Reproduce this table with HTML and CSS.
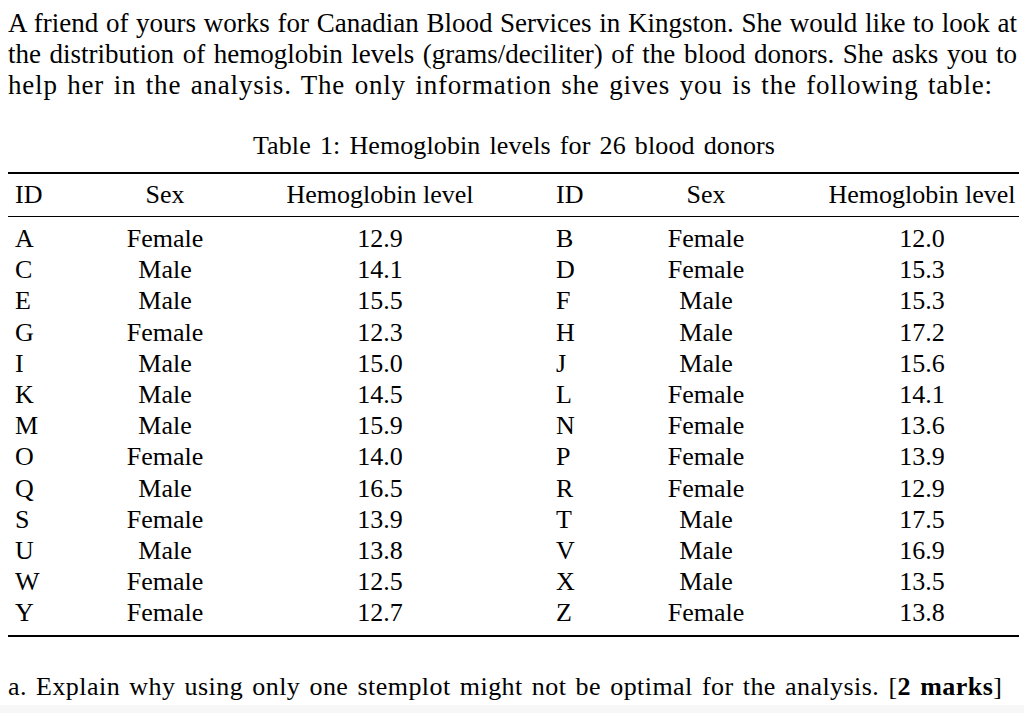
FILE: index.html
```html
<!DOCTYPE html>
<html>
<head>
<meta charset="utf-8">
<link rel="stylesheet" href="styles.css">
</head>
<body>
<div class="page">
  <p class="intro">
    <span class="line just">A friend of yours works for Canadian Blood Services in Kingston. She would like to look at</span>
    <span class="line just">the distribution of hemoglobin levels (grams/deciliter) of the blood donors. She asks you to</span>
    <span class="line last">help her in the analysis. The only information she gives you is the following table:</span>
  </p>
  <div class="caption">Table 1: Hemoglobin levels for 26 blood donors</div>
  <table class="data">
    <colgroup>
      <col class="c1"><col class="c2"><col class="c3"><col class="c4"><col class="c5"><col class="c6">
    </colgroup>
    <thead>
      <tr><th class="l">ID</th><th>Sex</th><th>Hemoglobin level</th><th class="l id2">ID</th><th>Sex</th><th class="hb2">Hemoglobin level</th></tr>
    </thead>
    <tbody>
      <tr><td class="l">A</td><td>Female</td><td>12.9</td><td class="l id2">B</td><td>Female</td><td class="hb2">12.0</td></tr>
      <tr><td class="l">C</td><td>Male</td><td>14.1</td><td class="l id2">D</td><td>Female</td><td class="hb2">15.3</td></tr>
      <tr><td class="l">E</td><td>Male</td><td>15.5</td><td class="l id2">F</td><td>Male</td><td class="hb2">15.3</td></tr>
      <tr><td class="l">G</td><td>Female</td><td>12.3</td><td class="l id2">H</td><td>Male</td><td class="hb2">17.2</td></tr>
      <tr><td class="l">I</td><td>Male</td><td>15.0</td><td class="l id2">J</td><td>Male</td><td class="hb2">15.6</td></tr>
      <tr><td class="l">K</td><td>Male</td><td>14.5</td><td class="l id2">L</td><td>Female</td><td class="hb2">14.1</td></tr>
      <tr><td class="l">M</td><td>Male</td><td>15.9</td><td class="l id2">N</td><td>Female</td><td class="hb2">13.6</td></tr>
      <tr><td class="l">O</td><td>Female</td><td>14.0</td><td class="l id2">P</td><td>Female</td><td class="hb2">13.9</td></tr>
      <tr><td class="l">Q</td><td>Male</td><td>16.5</td><td class="l id2">R</td><td>Female</td><td class="hb2">12.9</td></tr>
      <tr><td class="l">S</td><td>Female</td><td>13.9</td><td class="l id2">T</td><td>Male</td><td class="hb2">17.5</td></tr>
      <tr><td class="l">U</td><td>Male</td><td>13.8</td><td class="l id2">V</td><td>Male</td><td class="hb2">16.9</td></tr>
      <tr><td class="l">W</td><td>Female</td><td>12.5</td><td class="l id2">X</td><td>Male</td><td class="hb2">13.5</td></tr>
      <tr><td class="l">Y</td><td>Female</td><td>12.7</td><td class="l id2">Z</td><td>Female</td><td class="hb2">13.8</td></tr>
    </tbody>
  </table>
  <p class="question">a. Explain why using only one stemplot might not be optimal for the analysis. [<b>2 marks</b>]</p>
</div>
</body>
</html>
```
FILE: styles.css
```css
html {
  background: #f7f7f7;
}
body {
  margin: 0;
  font-family: "Liberation Serif", "Times New Roman", serif;
  font-size: 26px;
  line-height: 31px;
  color: #000;
}
.page {
  background: #fff;
  height: 705px;
  box-sizing: border-box;
  padding: 8px 5px 0 8px;
}
.intro {
  margin: 0 2px 0 0;
  font-size: 27px;
  line-height: 31px;
}
.line {
  display: block;
  text-align: left;
  white-space: nowrap;
}
.line.just {
  text-align: justify;
  text-align-last: justify;
  white-space: normal;
}
.line.last {
  letter-spacing: 0.8px;
  word-spacing: 2px;
}
.caption {
  margin-top: 29px;
  text-align: center;
  padding-left: 1px;
  word-spacing: 2.5px;
  letter-spacing: 0.1px;
}
.data {
  margin-top: 11px;
  width: 1011px;
  table-layout: fixed;
  border-collapse: separate;
  border-spacing: 0;
}
.c1 { width: 92px; }
.c2 { width: 130px; }
.c3 { width: 300px; }
.c4 { width: 110px; }
.c5 { width: 132px; }
.c6 { width: 247px; }
.data th,
.data td {
  font-weight: normal;
  text-align: center;
  padding: 0;
  line-height: 31.2px;
  white-space: nowrap;
}
.data th {
  border-top: 2px solid #000;
  border-bottom: 1px solid #000;
  padding: 5px 0 6px;
  line-height: 31px;
}
.data .l {
  text-align: left;
  padding-left: 7px;
}
.data .id2 {
  padding-left: 26px;
}
.data .hb2 {
  padding-left: 53px;
  padding-right: 0;
}
.data tbody tr:first-child td {
  padding-top: 6px;
}
.data tbody tr:last-child td {
  padding-bottom: 6px;
  border-bottom: 2px solid #000;
}
.question {
  margin: 34px 0 0;
  white-space: nowrap;
  word-spacing: 2.2px;
  letter-spacing: 0.45px;
}
.question b {
  font-weight: bold;
}
```
